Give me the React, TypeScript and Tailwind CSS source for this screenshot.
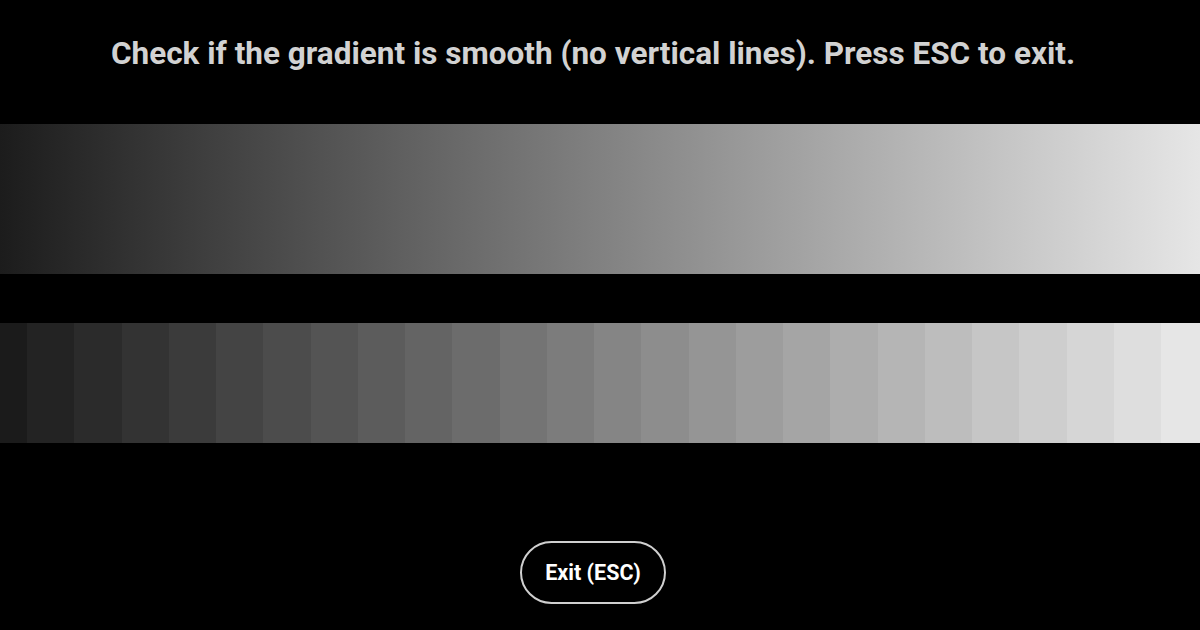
import React from "react";

const STEP_COUNT = 26;
const steps = Array.from({ length: STEP_COUNT }, (_, i) => {
  const v = Math.round(27 + (203 * i) / (STEP_COUNT - 1));
  return `rgb(${v}, ${v}, ${v})`;
});

export default function App() {
  return (
    <div className="min-h-screen w-full bg-black font-['Roboto','Liberation_Sans',sans-serif] flex flex-col">
      {/* Heading */}
      <div className="pr-[14px] pt-[30px] text-center">
        <h1 className="text-[31.5px] leading-[47px] font-bold text-[#d2d2d2]">
          Check if the gradient is smooth (no vertical lines). Press ESC to exit.
        </h1>
      </div>

      {/* Smooth gradient */}
      <div className="mt-[47px] h-[150px] w-full bg-[linear-gradient(to_right,#1c1c1c,#e6e6e6)]" />

      {/* Stepped bands */}
      <div className="mt-[49px] h-[120px] w-full flex">
        {steps.map((color, i) => (
          <div
            key={i}
            className={i === 0 ? "w-[27px] shrink-0" : i === STEP_COUNT - 1 ? "w-[39px] shrink-0" : "flex-1"}
            style={{ backgroundColor: color }}
          />
        ))}
      </div>

      {/* Exit button */}
      <div className="pr-[14px] mt-[98px] flex justify-center">
        <button className="rounded-full border-2 border-[#cfcfcf] bg-black px-[23px] py-[13.5px] text-[21.5px] leading-[32px] font-bold text-white">
          Exit (ESC)
        </button>
      </div>
    </div>
  );
}
